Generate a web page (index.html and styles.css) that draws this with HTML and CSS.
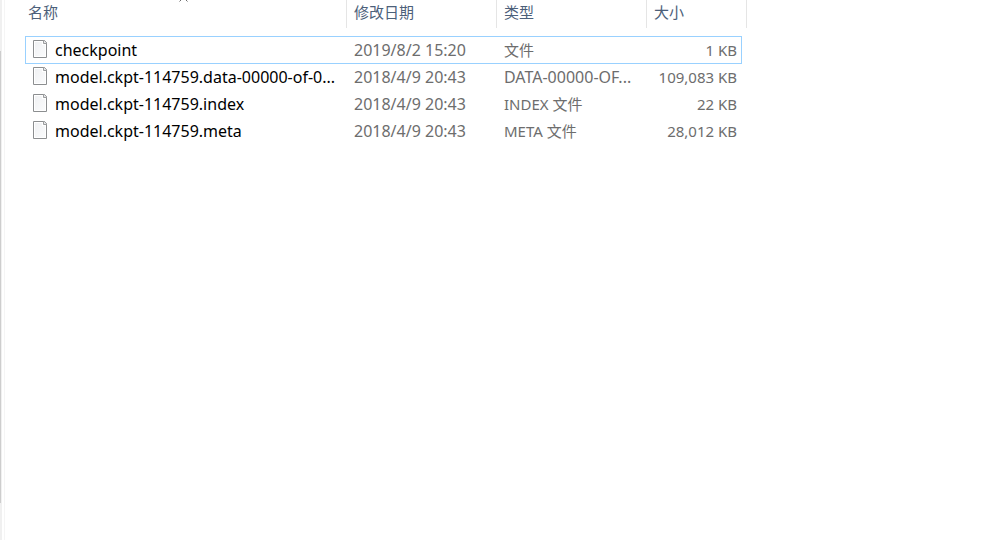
FILE: index.html
```
<!DOCTYPE html>
<html lang="zh-CN">
<head>
  <meta charset="UTF-8">
  <meta name="viewport" content="width=device-width, initial-scale=1.0">
  <title>checkpoint</title>
  <link rel="stylesheet" href="styles.css">
</head>
<body>
    <svg class="defs" width="0" height="0" aria-hidden="true">
        <defs>
            <linearGradient id="paper" x1="0" y1="0" x2="1" y2="1">
                <stop offset="0" stop-color="#f0f1f3" />
                <stop offset="1" stop-color="#fafbfc" />
            </linearGradient>
        </defs>
        <symbol id="file" viewBox="0 0 15 18">
            <path d="M0.5 0.5H11.5L13.5 2.5V17.5H0.5Z" fill="#fff" stroke="#8c8e90" />
            <path d="M2 2H9V5H12V16H2Z" fill="url(#paper)" />
            <path d="M10.5 0.5V3.5H13.5V2.5L11.5 0.5Z" fill="#e4e5e6" stroke="#9b9d9f" />
        </symbol>
    </svg>

    <div class="explorer">
        <div class="scrollbar">
            <div class="thumb"></div>
        </div>
        <main class="files">
            <table class="file-table">
                <thead>
                    <tr>
                        <th class="sorted" aria-sort="ascending">
                            名称
                            <svg class="sort-arrow" width="9" height="6" viewBox="0 0 9 6"><path d="M0.5 5.5L4.5 1.5L8.5 5.5" fill="none" stroke="#6d6d6d" /></svg>
                        </th>
                        <th>修改日期</th>
                        <th>类型</th>
                        <th>大小</th>
                    </tr>
                </thead>
                <tbody>
                    <tr class="focused">
                        <td class="name"><svg class="icon"><use href="#file" /></svg>checkpoint</td>
                        <td class="date">2019/8/2 15:20</td>
                        <td>文件</td>
                        <td class="size">1 KB</td>
                    </tr>
                    <tr>
                        <td class="name"><svg class="icon"><use href="#file" /></svg>model.ckpt-114759.data-00000-of-0...</td>
                        <td class="date">2018/4/9 20:43</td>
                        <td class="latin">DATA-00000-OF...</td>
                        <td class="size">109,083 KB</td>
                    </tr>
                    <tr>
                        <td class="name"><svg class="icon"><use href="#file" /></svg>model.ckpt-114759.index</td>
                        <td class="date">2018/4/9 20:43</td>
                        <td>INDEX 文件</td>
                        <td class="size">22 KB</td>
                    </tr>
                    <tr>
                        <td class="name"><svg class="icon"><use href="#file" /></svg>model.ckpt-114759.meta</td>
                        <td class="date">2018/4/9 20:43</td>
                        <td>META 文件</td>
                        <td class="size">28,012 KB</td>
                    </tr>
                </tbody>
            </table>
        </main>
    </div>
</body>
</html>
```

FILE: styles.css
```
* {
    margin: 0;
    padding: 0;
    box-sizing: border-box;
}
body {
    background: #fff;
    color: #6d6d6d;
    font-family: "Noto Sans", "Noto Sans CJK SC", sans-serif;
    font-size: 15px;
}
.defs {
    position: absolute;
}
.explorer {
    display: flex;
    min-height: 100vh;
}
.scrollbar {
    display: flex;
    width: 2px;
    padding: 51px 0 37px;
    background: #f0f0f0;
}
.thumb {
    width: 1px;
    background: #cdcdcd;
}
.files {
    flex: 1;
    margin-left: 2px;
    padding-left: 15px;
    border-left: 1px solid #f5f5f5;
}
.file-table, thead, tbody {
    display: block;
}
tr {
    display: grid;
    grid-template-columns: 327px 150px 150px 100px;
    width: max-content;
}
th {
    height: 28px;
    padding-left: 7px;
    border-right: 1px solid #e5e5e5;
    color: #4c607a;
    font-weight: normal;
    line-height: 24px;
    text-align: left;
}
.sorted {
    position: relative;
    padding-left: 8px;
}
.sort-arrow {
    position: absolute;
    top: -4px;
    left: 159px;
}
tbody {
    padding: 8px 5px;
}
/* rows are inset by 5px on both sides of the header */
tbody tr {
    grid-template-columns: 321px 150px 150px 94px;
    height: 27px;
    border: 1px solid transparent;
    line-height: 26px;
    white-space: nowrap;
}
tbody .focused {
    height: 28px;
    margin-bottom: -1px;
    border-color: #99d1ff;
}
td {
    padding-left: 7px;
}
.name, .date, .latin {
    font-size: 16px;
}
.name {
    display: flex;
    gap: 7px;
    color: #000;
}
.icon {
    width: 15px;
    height: 18px;
    margin-top: 3px;
}
.size {
    padding: 0 4px 0 0;
    text-align: right;
}
```
